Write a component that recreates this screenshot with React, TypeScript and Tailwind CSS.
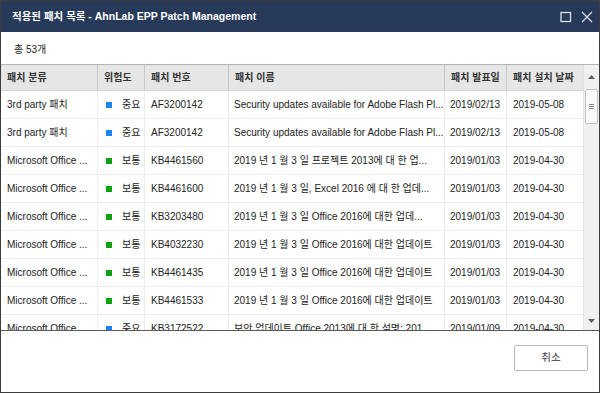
import React from 'react';

interface PatchRow {
  category: string;
  level: '중요' | '보통';
  id: string;
  name: string;
  released: string;
  installed: string;
}

const rows: PatchRow[] = [
  { category: '3rd party 패치', level: '중요', id: 'AF3200142', name: 'Security updates available for Adobe Flash Pl...', released: '2019/02/13', installed: '2019-05-08' },
  { category: '3rd party 패치', level: '중요', id: 'AF3200142', name: 'Security updates available for Adobe Flash Pl...', released: '2019/02/13', installed: '2019-05-08' },
  { category: 'Microsoft Office ...', level: '보통', id: 'KB4461560', name: '2019 년 1 월 3 일 프로젝트 2013에 대 한 업...', released: '2019/01/03', installed: '2019-04-30' },
  { category: 'Microsoft Office ...', level: '보통', id: 'KB4461600', name: '2019 년 1 월 3 일, Excel 2016 에 대 한 업데...', released: '2019/01/03', installed: '2019-04-30' },
  { category: 'Microsoft Office ...', level: '보통', id: 'KB3203480', name: '2019 년 1 월 3 일  Office 2016에 대한 업데...', released: '2019/01/03', installed: '2019-04-30' },
  { category: 'Microsoft Office ...', level: '보통', id: 'KB4032230', name: '2019 년 1 월 3 일 Office 2016에 대한 업데이트', released: '2019/01/03', installed: '2019-04-30' },
  { category: 'Microsoft Office ...', level: '보통', id: 'KB4461435', name: '2019 년 1 월 3 일 Office 2016에 대한 업데이트', released: '2019/01/03', installed: '2019-04-30' },
  { category: 'Microsoft Office ...', level: '보통', id: 'KB4461533', name: '2019 년 1 월 3 일 Office 2016에 대한 업데이트', released: '2019/01/03', installed: '2019-04-30' },
  { category: 'Microsoft Office ...', level: '중요', id: 'KB3172522', name: '보안 업데이트 Office 2013에 대 한 설명: 201...', released: '2019/01/09', installed: '2019-04-30' },
];

const headers = ['패치 분류', '위험도', '패치 번호', '패치 이름', '패치 발표일', '패치 설치 날짜'];
const widths = ['w-[97px]', 'w-[47px]', 'w-[84px]', 'w-[216px]', 'w-[62px]', 'w-[77px]'];

const App: React.FC = () => {
  return (
    <div
      className="w-[600px] h-[393px] flex flex-col bg-white border border-[#3c3c3c] overflow-hidden text-[10px] text-[#222]"
      style={{ fontFamily: '"Liberation Sans", "Noto Sans CJK KR", sans-serif' }}
    >
      {/* Title bar */}
      <div className="h-[31px] shrink-0 bg-[#283a5a] flex items-center justify-between pl-[11px] pr-[6px]">
        <span className="text-white font-bold text-[10.5px]">적용된 패치 목록 - AhnLab EPP Patch Management</span>
        <div className="flex items-center gap-[9px] text-[#d8dde6]">
          <svg width="12" height="12" viewBox="0 0 12 12">
            <rect x="1" y="1.5" width="9.5" height="9" fill="none" stroke="currentColor" strokeWidth="1.3" />
          </svg>
          <svg width="12" height="12" viewBox="0 0 12 12">
            <path d="M1 1 L11 11 M11 1 L1 11" stroke="currentColor" strokeWidth="1.2" />
          </svg>
        </div>
      </div>

      {/* Count */}
      <div className="h-[32px] shrink-0 flex items-center pl-[13px] pt-[2px] text-[10px] text-[#222]">총 53개</div>

      {/* Table */}
      <div className="h-[266px] shrink-0 border-t border-[#b4b4b4] flex overflow-hidden">
        <div className="flex-1 flex flex-col overflow-hidden">
          {/* Header */}
          <div className="h-[26px] shrink-0 flex bg-[#e6e6e6] border-b border-[#d4d4d4]">
            {headers.map((h, i) => (
              <div
                key={h}
                className={`${widths[i]} shrink-0 flex items-center pl-[6px] border-r border-[#c8c8c8] font-bold text-[#333] whitespace-nowrap overflow-hidden`}
              >
                {h}
              </div>
            ))}
          </div>

          {/* Body */}
          {rows.map((r, i) => (
            <div key={i} className="h-[28px] shrink-0 flex border-b border-[#ececec]">
              <div className={`${widths[0]} shrink-0 flex items-center pl-[6px] border-r border-[#ececec] whitespace-nowrap overflow-hidden`}>{r.category}</div>
              <div className={`${widths[1]} shrink-0 flex items-center pl-[8px] gap-[10px] border-r border-[#ececec]`}>
                <span className={`w-[6px] h-[6px] ${r.level === '중요' ? 'bg-[#1a84f0]' : 'bg-[#12a012]'}`} />
                <span>{r.level}</span>
              </div>
              <div className={`${widths[2]} shrink-0 flex items-center pl-[6px] border-r border-[#ececec]`}>{r.id}</div>
              <div className={`${widths[3]} shrink-0 flex items-center pl-[5px] border-r border-[#ececec] whitespace-nowrap overflow-hidden`}>{r.name}</div>
              <div className={`${widths[4]} shrink-0 flex items-center pl-[5px] border-r border-[#ececec]`}>{r.released}</div>
              <div className={`${widths[5]} shrink-0 flex items-center pl-[6px] border-r border-[#ececec]`}>{r.installed}</div>
            </div>
          ))}
        </div>

        {/* Scrollbar */}
        <div className="w-[16px] shrink-0 bg-[#f0f0f0] border-l border-[#e2e2e2] flex flex-col items-center">
          <div className="h-[24px] w-full flex items-center justify-center">
            <svg width="7" height="4" viewBox="0 0 7 4"><path d="M0 4 L3.5 0 L7 4 Z" fill="#606060" /></svg>
          </div>
          <div className="w-[13px] h-[35px] bg-[#fafafa] border border-[#c4c4c4] rounded-[2px] flex flex-col items-center justify-center gap-[1px]">
            <span className="w-[5px] h-px bg-[#8a8a8a]" />
            <span className="w-[5px] h-px bg-[#8a8a8a]" />
            <span className="w-[5px] h-px bg-[#8a8a8a]" />
          </div>
          <div className="flex-1" />
          <div className="h-[18px] w-full flex items-center justify-center">
            <svg width="7" height="4" viewBox="0 0 7 4"><path d="M0 0 L3.5 4 L7 0 Z" fill="#606060" /></svg>
          </div>
        </div>
      </div>

      {/* Footer */}
      <div className="flex-1 border-t border-[#5a5a5a] flex items-start justify-end pt-[14px] pr-[11px]">
        <button className="w-[74px] h-[26px] bg-white border border-[#b8b8b8] rounded-[2px] text-[10.5px] text-[#333]">취소</button>
      </div>
    </div>
  );
};

export default App;
